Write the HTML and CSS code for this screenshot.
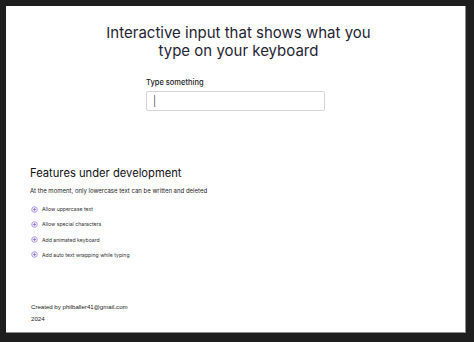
FILE: index.html
```html
<!DOCTYPE html>
<html lang="en">
<head>
<meta charset="utf-8">
<title>Interactive input</title>
<link rel="stylesheet" href="styles.css">
</head>
<body>
<div class="page">
  <header class="hero">
    <h1 class="title">Interactive input that shows what you type on your keyboard</h1>
    <div class="field">
      <label class="field-label">Type something</label>
      <div class="field-input"><span class="caret">|</span></div>
    </div>
  </header>
  <section class="features">
    <h2 class="features-title">Features under development</h2>
    <p class="features-note">At the moment, only lowercase text can be written and deleted</p>
    <ul class="features-list">
      <li class="feature"><svg class="feature-icon" viewBox="0 0 16 16"><circle cx="8" cy="8" r="6.5" fill="#f1ecfd" stroke="#8b6fe0" stroke-width="1.4"/><path d="M8 5.2v5.6M5.2 8h5.6" stroke="#7656d8" stroke-width="1.4" stroke-linecap="round"/></svg><span>Allow uppercase text</span></li>
      <li class="feature"><svg class="feature-icon" viewBox="0 0 16 16"><circle cx="8" cy="8" r="6.5" fill="#f1ecfd" stroke="#8b6fe0" stroke-width="1.4"/><path d="M8 5.2v5.6M5.2 8h5.6" stroke="#7656d8" stroke-width="1.4" stroke-linecap="round"/></svg><span>Allow special characters</span></li>
      <li class="feature"><svg class="feature-icon" viewBox="0 0 16 16"><circle cx="8" cy="8" r="6.5" fill="#f1ecfd" stroke="#8b6fe0" stroke-width="1.4"/><path d="M8 5.2v5.6M5.2 8h5.6" stroke="#7656d8" stroke-width="1.4" stroke-linecap="round"/></svg><span>Add animated keyboard</span></li>
      <li class="feature"><svg class="feature-icon" viewBox="0 0 16 16"><circle cx="8" cy="8" r="6.5" fill="#f1ecfd" stroke="#8b6fe0" stroke-width="1.4"/><path d="M8 5.2v5.6M5.2 8h5.6" stroke="#7656d8" stroke-width="1.4" stroke-linecap="round"/></svg><span>Add auto text wrapping while typing</span></li>
    </ul>
  </section>
  <footer class="footer">
    <p class="footer-line">Created by philballer41@gmail.com</p>
    <p class="footer-line">2024</p>
  </footer>
</div>
</body>
</html>
```
FILE: styles.css
```css
html, body {
  margin: 0;
  height: 100%;
}
body {
  background: #1e1e1e;
  padding: 6px 8px 9px 6px;
  box-sizing: border-box;
  font-family: Inter, "Noto Sans", sans-serif;
  color: #1f2430;
}
.page {
  background: #ffffff;
  height: 100%;
  box-sizing: border-box;
  display: flex;
  flex-direction: column;
  border-right: 1px solid #8c8c8c;
  border-bottom: 1px solid #8c8c8c;
}
.hero {
  padding-top: 18px;
  display: flex;
  flex-direction: column;
  align-items: center;
}
.title {
  margin: 0;
  width: 290px;
  text-align: center;
  font-size: 15px;
  font-weight: 400;
  line-height: 18px;
  color: #1f2433;
  padding-left: 6px;
}
.field {
  width: 179px;
  margin-top: 18px;
  display: flex;
  flex-direction: column;
  gap: 4px;
}
.field-label {
  font-size: 7.5px;
  line-height: 9px;
  font-weight: 500;
  color: #222;
}
.field-input {
  height: 20px;
  box-sizing: border-box;
  border: 1px solid #d4d4d8;
  border-radius: 2px;
  padding-left: 6px;
  display: flex;
  align-items: center;
  font-size: 10px;
  color: #222;
}
.caret {
  font-weight: 300;
}
.features {
  margin-top: 55px;
  padding-left: 24px;
}
.features-title {
  margin: 0;
  font-size: 11.2px;
  line-height: 15px;
  font-weight: 400;
  color: #111;
}
.features-note {
  margin: 6px 0 0;
  font-size: 6px;
  line-height: 8px;
  color: #222;
}
.features-list {
  list-style: none;
  margin: 10px 0 0;
  padding: 0 0 0 1px;
  display: flex;
  flex-direction: column;
  gap: 7.3px;
}
.feature {
  display: flex;
  align-items: center;
  gap: 4px;
  font-size: 5.15px;
  line-height: 8px;
  color: #333;
}
.feature-icon {
  width: 7px;
  height: 7px;
  flex: none;
}
.footer {
  margin-top: auto;
  padding: 0 0 9px 25px;
  display: flex;
  flex-direction: column;
  gap: 4.5px;
  font-family: "Liberation Sans", Arial, sans-serif;
}
.footer-line {
  margin: 0;
  font-size: 6.1px;
  line-height: 8px;
  color: #222;
}
```
